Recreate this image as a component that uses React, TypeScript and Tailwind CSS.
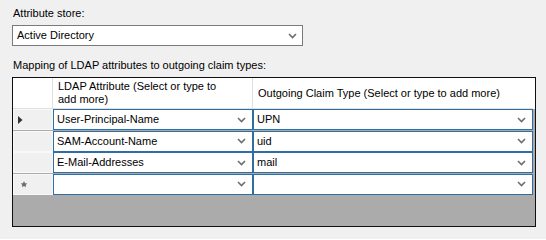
import React from "react";

const font = { fontFamily: '"Liberation Sans", Arial, sans-serif' };

function Chevron() {
  return (
    <svg width="9" height="6" viewBox="0 0 9 6" className="shrink-0">
      <path d="M1 1 L4.5 4.5 L8 1" fill="none" stroke="#6d6d6d" strokeWidth="1.6" />
    </svg>
  );
}

function Combo({ text, className }: { text: string; className: string }) {
  return (
    <div className={`flex items-center justify-between bg-white border border-[#2f6ea5] h-[21px] pl-[3px] pr-[6px] text-[11px] text-black ${className}`}>
      <span className="leading-none">{text}</span>
      <Chevron />
    </div>
  );
}

function RowHead({ mark }: { mark?: "arrow" | "star" }) {
  return (
    <div className="w-[40px] h-[21px] bg-[#f0f0f0] border border-[#f8f8f8] flex items-center pl-[4px]">
      {mark === "arrow" && (
        <svg width="5" height="8" viewBox="0 0 5 8">
          <path d="M0 0 L4.5 4 L0 8 Z" fill="#333" />
        </svg>
      )}
      {mark === "star" && (
        <svg width="14" height="8" viewBox="0 0 14 8">
          <path d="M6 1 L7 3.2 L9.3 3.4 L7.6 5 L8.1 7.3 L6 6.1 L3.9 7.3 L4.4 5 L2.7 3.4 L5 3.2 Z" fill="#6a6a6a" />
        </svg>
      )}
    </div>
  );
}

export default function App() {
  const rows: { a: string; b: string; mark?: "arrow" | "star" }[] = [
    { a: "User-Principal-Name", b: "UPN", mark: "arrow" },
    { a: "SAM-Account-Name", b: "uid" },
    { a: "E-Mail-Addresses", b: "mail" },
    { a: "", b: "", mark: "star" },
  ];
  return (
    <div className="w-[546px] h-[239px] bg-[#f0f0f0] pl-[12px] pt-[6px] text-black" style={font}>
      <div className="text-[11px] leading-[14px] pl-[1px]">Attribute store:</div>
      <div className="mt-[5px] w-[291px] h-[21px] bg-white border border-[#7a7a7a] flex items-center justify-between pl-[4px] pr-[5px] text-[11px]">
        <span>Active Directory</span>
        <Chevron />
      </div>
      <div className="mt-[12px] text-[11px] leading-[14px] pl-[1px]">Mapping of LDAP attributes to outgoing claim types:</div>
      <div className="mt-[5px] w-[524px] h-[150px] border border-[#101010] bg-[#ababab] flex flex-col">
        <div className="flex h-[31px] bg-white">
          <div className="w-[40px] border-r border-b border-[#e0e0e0] bg-white" />
          <div className="w-[200px] border-r border-b border-[#e0e0e0] pl-[5px] pt-[2px] text-[11px] leading-[13px]">
            LDAP Attribute (Select or type to
            <br />
            add more)
          </div>
          <div className="w-[280px] border-b border-[#e0e0e0] pl-[5px] flex items-center text-[11px]">
            Outgoing Claim Type (Select or type to add more)
          </div>
          <div className="flex-1 bg-white" />
        </div>
        {rows.map((r, i) => (
          <div key={i} className="flex h-[21.5px] items-start">
            <RowHead mark={r.mark} />
            <Combo text={r.a} className="w-[200px]" />
            <Combo text={r.b} className="w-[280px]" />
          </div>
        ))}
      </div>
    </div>
  );
}
